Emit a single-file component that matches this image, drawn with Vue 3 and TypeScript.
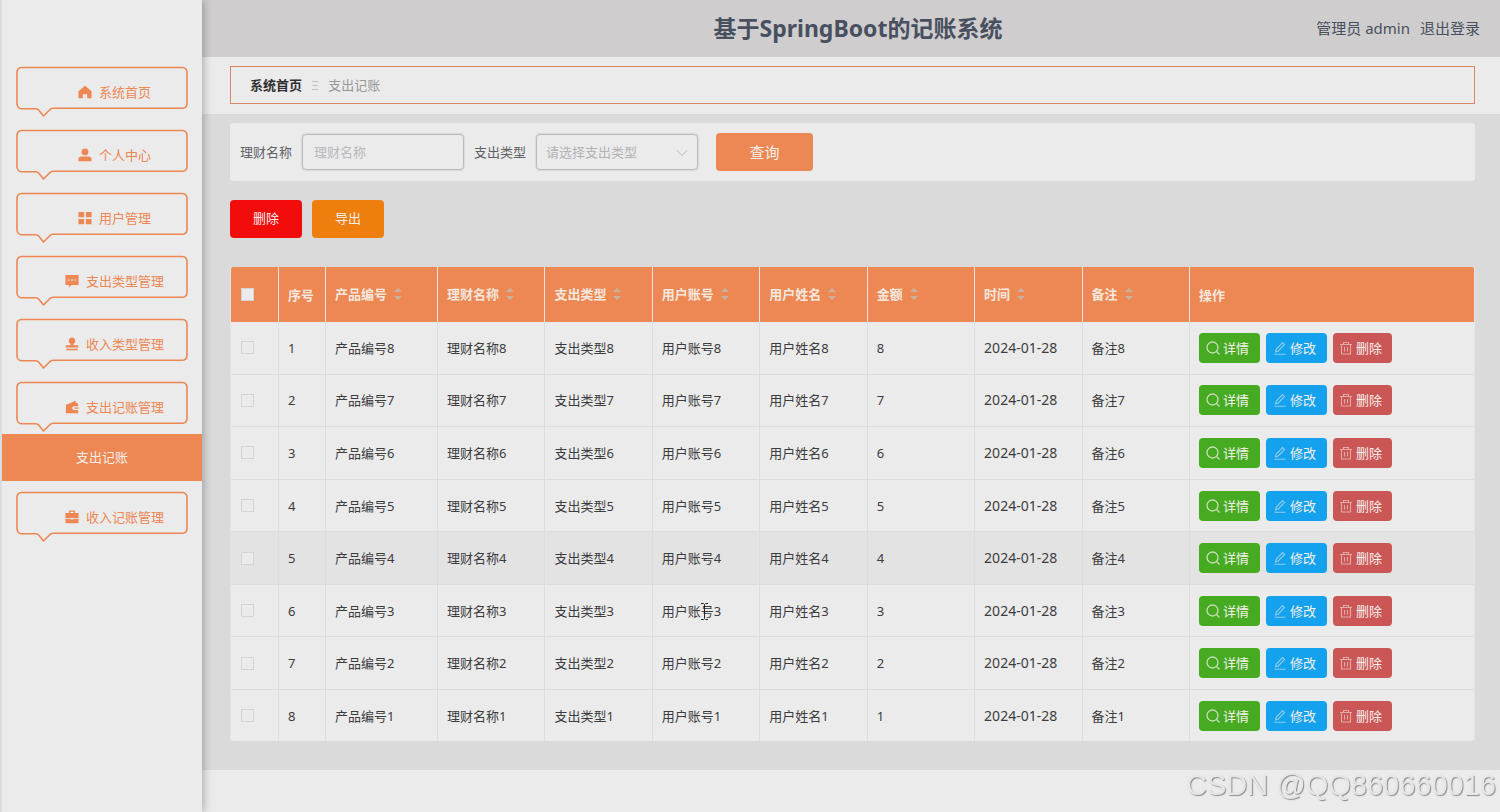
<script setup lang="ts">
import { computed, ref } from 'vue'

interface MenuItem {
  label: string
  icon: string
  child?: string
}

interface Entry {
  id: number
  date: string
}

const icons: Record<string, string> = {
  home: 'M8 .8 15.500 7v7.200a.9.9 0 0 1-.9.9H10.500v-4.600h-5v4.600H1.400a.9.9 0 0 1-.9-.9V7Z',
  user: 'M8 .6a3.900 3.900 0 1 1 0 7.800 3.900 3.900 0 0 1 0-7.800ZM.5 15v-2.200C.5 10.900 1.800 9.800 3.500 9.800h9c1.700 0 3 1.100 3 3V15Z',
  grid: 'M.5 1h6.500v6H.5ZM9 1h6.500v6H9ZM.5 9h6.500v6H.5ZM9 9h6.500v6H9Z',
  comment: 'M.5 1h15v11.500H7.500L4.500 15.500v-3h-4ZM3.300 6v1.600h1.700V6ZM7.200 6v1.600h1.700V6ZM11 6v1.600h1.700V6Z',
  stamp: 'M8 .5a3.800 3.800 0 0 1 2.200 6.900c-.5.500-.7 1.300-.6 2.100h4.400a1.300 1.300 0 0 1 1.300 1.300v1.200H.7v-1.200A1.300 1.300 0 0 1 2 9.500h4.400c.1-.8-.1-1.600-.6-2.100A3.800 3.800 0 0 1 8 .5ZM1.500 13.500h13V15h-13Z',
  wallet: 'M4.500 4.300 11.500.8l1.700 2.700 1.800.800V7H10.500a2.200 2.200 0 0 0 0 4.500H15V15H1V5.500l3.500-1.200ZM10.800 8.500H15.500v1.600h-4.700Z',
  briefcase: 'M4.500 3.500v-2L5.500.5h5l1 1v2H15.500v5.500H.5v-5.500ZM6 3.500h4V2H6ZM.5 10h6v.8h3V10h6V15H.5Z',
}

const menu: MenuItem[] = [
  { label: '系统首页', icon: 'home' },
  { label: '个人中心', icon: 'user' },
  { label: '用户管理', icon: 'grid' },
  { label: '支出类型管理', icon: 'comment' },
  { label: '收入类型管理', icon: 'stamp' },
  { label: '支出记账管理', icon: 'wallet', child: '支出记账' },
  { label: '收入记账管理', icon: 'briefcase' },
]

const columns = ['产品编号', '理财名称', '支出类型', '用户账号', '用户姓名', '金额', '时间', '备注']

const entries: Entry[] = [8, 7, 6, 5, 4, 3, 2, 1].map((id) => ({ id, date: '2024-01-28' }))

const name = ref('')
const type = ref('')
const selected = ref<number[]>([])
const hovered = ref(4)

const allSelected = computed({
  get: () => selected.value.length === entries.length,
  set: (on: boolean) => {
    selected.value = on ? entries.map((e) => e.id) : []
  },
})
</script>

<template>
  <div class="layout">
    <aside class="sidebar">
      <nav>
        <ul class="menu">
          <li v-for="item in menu" :key="item.label">
            <a href="#" class="bubble">
              <svg class="outline" viewBox="0 0 172 52" aria-hidden="true">
                <path
                  d="M5.500 1.500H166.500A5 5 0 0 1 171 6V37.500A5 5 0 0 1 166.500 42.300H37C34.500 42.300 34 43.500 32.500 45L27.500 50L23.500 45C22.500 43.500 22 42.800 20 42.800H6A5 5 0 0 1 1 38V6A5 5 0 0 1 5.500 1.500Z"
                />
              </svg>
              <svg class="icon" viewBox="0 0 16 16" aria-hidden="true">
                <path :d="icons[item.icon]" fill-rule="evenodd" />
              </svg>
              <span>{{ item.label }}</span>
            </a>
            <a v-if="item.child" href="#" class="child">{{ item.child }}</a>
          </li>
        </ul>
      </nav>
    </aside>

    <div class="page">
      <header class="topbar">
        <h1>基于SpringBoot的记账系统</h1>
        <div class="account">
          <span>管理员 admin</span>
          <a href="#">退出登录</a>
        </div>
      </header>

      <div class="crumb-band">
        <nav class="crumbs">
          <a href="#">系统首页</a>
          <span class="sep">Ξ</span>
          <span>支出记账</span>
        </nav>
      </div>

      <main class="content">
        <form class="search" @submit.prevent>
          <label for="name">理财名称</label>
          <input id="name" v-model="name" class="field" type="text" placeholder="理财名称" />
          <label for="type">支出类型</label>
          <div class="select-wrap">
            <select id="type" v-model="type" class="field">
              <option value="">请选择支出类型</option>
              <option v-for="e in entries" :key="e.id" :value="String(e.id)">支出类型{{ e.id }}</option>
            </select>
            <svg class="chevron" viewBox="0 0 12 12" aria-hidden="true"><path d="M1 3.500 6 8.500 11 3.500" /></svg>
          </div>
          <button class="query" type="submit">查询</button>
        </form>

        <div class="actions">
          <button class="remove" type="button">删除</button>
          <button class="export" type="button">导出</button>
        </div>

        <table class="grid">
          <colgroup>
            <col class="c-check" />
            <col class="c-index" />
            <col class="c-code" />
            <col v-for="n in 7" :key="n" />
            <col class="c-ops" />
          </colgroup>
          <thead>
            <tr>
              <th class="check"><input v-model="allSelected" type="checkbox" aria-label="全选" /></th>
              <th>序号</th>
              <th v-for="c in columns" :key="c">
                <span class="sortable">
                  {{ c }}
                  <svg viewBox="0 0 10 14" aria-hidden="true"><path d="M5 1 9 5H1ZM1 9H9L5 13Z" /></svg>
                </span>
              </th>
              <th>操作</th>
            </tr>
          </thead>
          <tbody>
            <tr v-for="(e, i) in entries" :key="e.id" :class="{ hovered: i === hovered }">
              <td class="check">
                <input v-model="selected" type="checkbox" :value="e.id" :aria-label="`选择第${i + 1}行`" />
              </td>
              <td>{{ i + 1 }}</td>
              <td>产品编号{{ e.id }}</td>
              <td>理财名称{{ e.id }}</td>
              <td>支出类型{{ e.id }}</td>
              <td>
                <span class="cell">
                  用户账号{{ e.id }}
                  <svg v-if="e.id === 3" class="pointer" viewBox="0 0 9 17" aria-hidden="true">
                    <path d="M1 .5h2.500l1 1 1-1H8M4.500 1.500v14M1 16.500h2.500l1-1 1 1H8" />
                  </svg>
                </span>
              </td>
              <td>用户姓名{{ e.id }}</td>
              <td>{{ e.id }}</td>
              <td class="date">{{ e.date }}</td>
              <td>备注{{ e.id }}</td>
              <td>
                <div class="ops">
                  <button type="button" class="view">
                    <svg viewBox="0 0 14 14" aria-hidden="true"><circle cx="6.500" cy="6.500" r="5.500" /><path d="m10.500 10.500 3 3" /></svg>详情
                  </button>
                  <button type="button" class="edit">
                    <svg class="thin" viewBox="0 0 14 14" aria-hidden="true"><path d="M2.500 11 3.300 8 9.500 1.500l2 2L5.300 10ZM1.500 13.300H12.500" /></svg>修改
                  </button>
                  <button type="button" class="drop">
                    <svg class="thin" viewBox="0 0 14 14" aria-hidden="true"><path d="M1 3.500H13M4.500 3.500v-2h5v2M2.500 3.500v9.500h9V3.500M5.500 6v4.500M8.500 6v4.500" /></svg>删除
                  </button>
                </div>
              </td>
            </tr>
          </tbody>
        </table>
      </main>
    </div>

    <div class="watermark">CSDN @QQ860660016</div>
  </div>
</template>

<style>
body {
  background: #ebebeb;
}
</style>

<style scoped>
.layout {
  --orange: #ed8754;
  --surface: #ebebeb;
  display: flex;
  min-height: 100vh;
  background: var(--surface);
  color: #3c3c3f;
  font: 13px/20px 'Noto Sans', 'Noto Sans CJK SC', sans-serif;
}

*,
*::before {
  box-sizing: border-box;
}

a {
  color: inherit;
  text-decoration: none;
}

button,
input,
select {
  font: inherit;
}

button {
  border: 0;
  padding: 0;
  color: #f5f0ec;
  border-radius: 4px;
  cursor: pointer;
}

.sidebar {
  flex: none;
  width: 202px;
  padding-top: 56px;
  border-left: 2px solid #dcdcde;
  background: var(--surface);
  box-shadow: 2px 0 8px rgba(0, 0, 0, 0.26);
  z-index: 1;
}

.menu {
  margin: 0;
  padding: 0;
  list-style: none;
}

.bubble {
  position: relative;
  display: flex;
  align-items: center;
  justify-content: center;
  gap: 7px;
  height: 52px;
  margin: 0 14px 1px;
  padding-left: 25px;
  color: var(--orange);
}

.menu li {
  padding-top: 10px;
}

.outline {
  position: absolute;
  inset: 0;
  width: 172px;
  height: 52px;
  fill: none;
  stroke: var(--orange);
  stroke-width: 1.6;
  stroke-linejoin: round;
}

.icon {
  width: 14px;
  height: 14px;
  fill: var(--orange);
}

.child {
  display: block;
  line-height: 47px;
  text-align: center;
  color: #f5ece6;
  background: var(--orange);
}

.page {
  flex: 1;
  min-width: 0;
}

.topbar {
  display: grid;
  grid-template-columns: 1fr auto 1fr;
  align-items: center;
  height: 57px;
  padding: 0 20px 2px 34px;
  background: #cfcdcd;
  color: #485060;
}

.topbar h1 {
  grid-column: 2;
  margin: 0;
  font-size: 23px;
  line-height: 32px;
}

.account {
  display: flex;
  justify-content: flex-end;
  gap: 10px;
  font-size: 15px;
}

.crumb-band {
  padding: 9px 25px 10px 28px;
}

.crumbs {
  display: flex;
  align-items: center;
  gap: 9px;
  height: 38px;
  padding: 0 19px;
  border: 1px solid #dc8763;
  color: #98989a;
}

.crumbs a {
  font-weight: 700;
  color: #303033;
}

.sep {
  color: #c0c0c4;
}

.content {
  padding: 9px 25px 29px 28px;
  background: #dadada;
}

.search {
  display: flex;
  align-items: center;
  gap: 10px;
  height: 58px;
  padding: 0 10px;
  border-radius: 3px;
  background: var(--surface);
  color: #606266;
}

.field {
  width: 162px;
  height: 36px;
  padding: 0 11px;
  border: 1px solid #b8babe;
  border-radius: 4px;
  background: transparent;
  box-shadow: 0 0 2px rgba(0, 0, 0, 0.25);
  color: #b2b3b7;
  outline: 0;
}

.field::placeholder {
  color: #b8b9bd;
  opacity: 1;
}

.select-wrap {
  position: relative;
}

select.field {
  display: block;
  padding: 0 9px;
  appearance: none;
}

.chevron {
  position: absolute;
  top: 13px;
  right: 10px;
  width: 12px;
  height: 12px;
  fill: none;
  stroke: #b8b9bd;
  pointer-events: none;
}

.query {
  width: 97px;
  height: 38px;
  margin-left: 8px;
  background: var(--orange);
  font-size: 15px;
}

.actions {
  display: flex;
  gap: 10px;
  margin: 19px 0 29px;
}

.actions button {
  width: 72px;
  height: 38px;
  padding-bottom: 2px;
}

.remove {
  background: #f20c0c;
}

.export {
  background: #ee7e0e;
}

.grid {
  width: 100%;
  height: 474px;
  table-layout: fixed;
  border-spacing: 0;
  border: solid #e4e4e6;
  border-width: 0 1px;
  border-radius: 3px;
  overflow: hidden;
  background: var(--surface);
}

.c-check {
  width: 48px;
}

.c-index {
  width: 47px;
}

.c-code {
  width: 112px;
}

.c-ops {
  width: 284px;
}

.grid th,
.grid td {
  padding: 0 9px;
  text-align: left;
  border-right: 1px solid #dddde0;
  border-bottom: 1px solid #dddde0;
}

.grid th {
  height: 55px;
  background: var(--orange);
  border-right-color: #f0e4de;
  border-bottom: 0;
  color: #f6e7de;
}

.grid th:last-child,
.grid td:last-child {
  border-right: 0;
}

.grid tbody tr:last-child td {
  border-bottom: 0;
}

.grid .check {
  padding: 0 10px;
}

.check input {
  display: block;
  appearance: none;
  width: 13px;
  height: 13px;
  margin: 0;
  border: 1px solid #d5d5d8;
  background: var(--surface);
}

.check input:checked {
  background: #409eff;
}

.hovered {
  background: #e4e3e4;
}

.sortable {
  display: flex;
  align-items: center;
  gap: 6px;
  padding-bottom: 2px;
}

.sortable svg {
  width: 10px;
  height: 14px;
  fill: #cbb09d;
}

.date {
  font-size: 14px;
}

.cell {
  position: relative;
}

.pointer {
  position: absolute;
  top: 1px;
  left: 38px;
  width: 9px;
  height: 17px;
  fill: none;
  stroke: #222;
}

.ops {
  display: flex;
  gap: 6px;
}

.ops button {
  display: flex;
  align-items: center;
  gap: 3px;
  width: 61px;
  height: 30px;
  padding-left: 7px;
}

.ops svg {
  width: 14px;
  height: 14px;
  fill: none;
  stroke: currentColor;
  stroke-width: 1.3;
  opacity: 0.75;
}

.ops .thin {
  stroke-width: 1.1;
  opacity: 0.55;
}

.view {
  background: #47ab22;
}

.edit {
  background: #14a2ee;
}

.ops .drop {
  width: 59px;
  padding-left: 6px;
  background: #cb5656;
}

.watermark {
  position: fixed;
  right: 4px;
  bottom: 10px;
  z-index: 2;
  font: 29px/34px 'Liberation Sans', Arial, sans-serif;
  color: #e6e6e6;
  text-shadow: 1px 1px 1px #8c8c8e;
  pointer-events: none;
}
</style>
